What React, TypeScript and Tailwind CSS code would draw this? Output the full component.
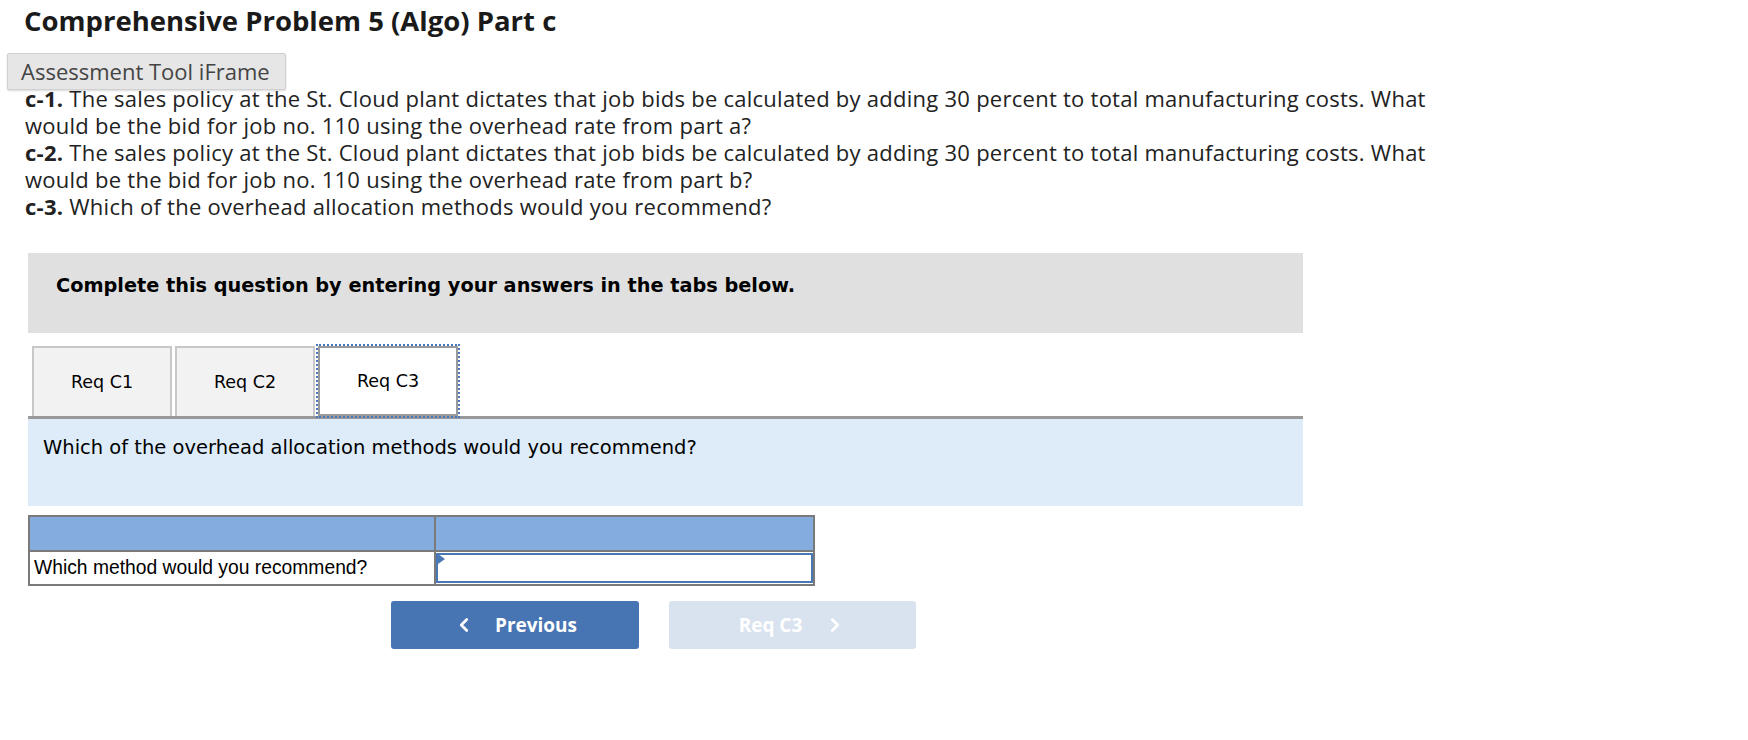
import React from "react";
import { ChevronLeft, ChevronRight } from "lucide-react";

const tabs = ["Req C1", "Req C2", "Req C3"];

function Tab({ label, active }: { label: string; active: boolean }) {
  return (
    <div
      className={`flex h-[70px] w-[140px] items-center justify-center font-['DejaVu_Sans',sans-serif] text-[17.5px] text-black ${
        active
          ? "border-2 border-[#9a9a9a] bg-white outline-2 outline-dotted outline-[#4a78c0]"
          : "border-2 border-b-0 border-[#c8c8c8] bg-[#f2f2f2]"
      }`}
    >
      {label}
    </div>
  );
}

export default function App() {
  return (
    <div className="relative h-[740px] w-[1748px] bg-white font-['Open_Sans',sans-serif] text-[#222]">
      <h1 className="pl-[24px] pt-[3px] text-[27.5px] font-bold leading-[36px] text-[#1a1a1a]">
        Comprehensive Problem 5 (Algo) Part c
      </h1>

      <div className="absolute left-[7px] top-[53px] flex h-[37px] w-[279px] items-center rounded-[2px] border border-[#d0d0d0] bg-[#e6e6e6] pl-[13px] text-[22px] text-[#444] shadow-[0_1px_2px_rgba(0,0,0,0.15)]">
        Assessment Tool iFrame
      </div>

      <div className="mt-[46px] pl-[25px] text-[22px] leading-[27px] tracking-[0.26px]">
        <p>
          <b>c-1.</b> The sales policy at the St. Cloud plant dictates that job bids be calculated by
          adding 30 percent to total manufacturing costs. What
          <br />
          would be the bid for job no. 110 using the overhead rate from part a?
        </p>
        <p>
          <b>c-2.</b> The sales policy at the St. Cloud plant dictates that job bids be calculated by
          adding 30 percent to total manufacturing costs. What
          <br />
          would be the bid for job no. 110 using the overhead rate from part b?
        </p>
        <p>
          <b>c-3.</b> Which of the overhead allocation methods would you recommend?
        </p>
      </div>

      <div className="ml-[28px] mt-[33px] w-[1275px]">
        <div className="h-[80px] bg-[#e0e0e0] pl-[28px] pt-[20px] font-['DejaVu_Sans',sans-serif] text-[19.3px] font-bold leading-[26px] text-black">
          Complete this question by entering your answers in the tabs below.
        </div>

        <div className="mt-[13px] flex gap-[3px] border-b-[3px] border-[#999] pl-[4px]">
          {tabs.map((t) => (
            <Tab key={t} label={t} active={t === "Req C3"} />
          ))}
        </div>

        <div className="h-[87px] bg-[#ddecf8] pl-[15px] pt-[16px] font-['DejaVu_Sans',sans-serif] text-[19.5px] leading-[26px] text-black">
          Which of the overhead allocation methods would you recommend?
        </div>

        <table className="mt-[9px] w-[787px] border-collapse border-2 border-[#7a7a7a] font-['Liberation_Sans',sans-serif] text-[19.3px] text-black">
          <tbody>
            <tr className="h-[35px] bg-[#84acdf]">
              <td className="w-[406px] border-2 border-[#7a7a7a]"></td>
              <td className="border-2 border-[#7a7a7a]"></td>
            </tr>
            <tr className="h-[34px]">
              <td className="border-2 border-[#7a7a7a] pl-[4px] leading-[28px]">Which method would you recommend?</td>
              <td className="relative border-2 border-[#7a7a7a] p-0">
                <div className="h-[30px] border-2 border-[#4a78b5] bg-white"></div>
                <span className="absolute left-[2px] top-[2px] h-0 w-0 border-y-[5px] border-l-[7px] border-y-transparent border-l-[#4a78b5]"></span>
              </td>
            </tr>
          </tbody>
        </table>

        <div className="mt-[15px] flex gap-[30px] pl-[363px]">
          <button className="flex h-[48px] w-[248px] items-center justify-center gap-[20px] rounded-[3px] bg-[#4774b2] text-[19px] font-bold text-white">
            <ChevronLeft size={22} strokeWidth={3} />
            Previous
          </button>
          <button className="flex h-[48px] w-[247px] items-center justify-center gap-[22px] rounded-[3px] bg-[#d9e3ef] text-[19px] font-bold text-white">
            Req C3
            <ChevronRight size={22} strokeWidth={3} />
          </button>
        </div>
      </div>
    </div>
  );
}
